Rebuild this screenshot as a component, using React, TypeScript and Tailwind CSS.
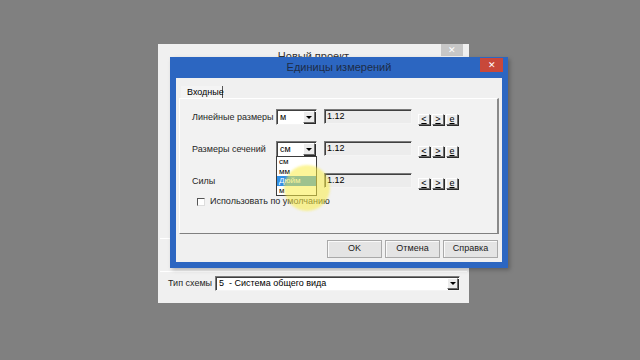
import React from 'react';

const sunken = 'border border-t-[#7a7a7a] border-l-[#7a7a7a] border-b-[#f4f4f4] border-r-[#f4f4f4] shadow-[inset_1px_1px_0_#404040]';
const raised = 'border border-t-[#ffffff] border-l-[#ffffff] border-b-[#6b6b6b] border-r-[#6b6b6b] shadow-[1px_1px_0_#2a2a2a] bg-[#ececec]';

function Combo({ value }: { value: string }) {
  return (
    <div className={`w-[41px] h-[16px] bg-white flex items-center ${sunken}`}>
      <span className="flex-1 pl-[3px] text-[9px] leading-none text-black">{value}</span>
      <div className={`w-[12px] h-[12px] mr-[1px] flex items-center justify-center ${raised}`}>
        <span className="w-0 h-0 border-l-[3px] border-r-[3px] border-t-[3px] border-l-transparent border-r-transparent border-t-black" />
      </div>
    </div>
  );
}

function NavButtons() {
  return (
    <div className="flex gap-[2px] mt-[5px] ml-[6px]">
      {['<', '>', 'e'].map((t) => (
        <div
          key={t}
          className={`w-[12px] h-[11px] flex items-center justify-center text-[9px] leading-none text-black ${raised}`}
        >
          <span className="underline decoration-[0.5px] underline-offset-1">{t}</span>
        </div>
      ))}
    </div>
  );
}

function Row({ label, unit, children }: { label: string; unit: string; children?: React.ReactNode }) {
  return (
    <div className="relative flex items-start h-[16px]">
      <span className="w-[84px] mt-[3px] text-[9px] leading-[10px] text-[#262626] whitespace-nowrap">{label}</span>
      <div className="relative">
        <Combo value={unit} />
        {children}
      </div>
      <div className={`ml-[7px] w-[88px] h-[15px] bg-[#ececec] text-[9px] leading-none pl-[2px] pt-[2px] text-black ${sunken}`}>
        1.12
      </div>
      <NavButtons />
    </div>
  );
}

function DropList() {
  const items = ['см', 'мм', 'Дюйм', 'м'];
  return (
    <div className="absolute left-0 top-[15px] w-[41px] bg-white border border-[#3c3c3c] flex flex-col z-10">
      {items.map((it) => (
        <div
          key={it}
          className={`h-[9.5px] pl-[2px] text-[8px] leading-[9.5px] ${
            it === 'Дюйм' ? 'bg-[#2f8fe6] text-white' : 'text-black'
          }`}
        >
          {it}
        </div>
      ))}
    </div>
  );
}

function DlgButton({ label }: { label: string }) {
  return (
    <div className="w-[55px] h-[18px] bg-[#e4e4e4] border border-[#a9a9a9] shadow-[inset_1px_1px_0_#fafafa] flex items-center justify-center text-[9px] text-[#1a1a1a]">
      {label}
    </div>
  );
}

export default function App() {
  return (
    <div className="relative w-[640px] h-[360px] bg-[#808080] overflow-hidden font-['Liberation_Sans',Arial,sans-serif]">
      {/* Back window: Новый проект */}
      <div className="absolute left-[158px] top-[44px] w-[311px] h-[259px] bg-[#f0f0f0] flex flex-col">
        <div className="relative h-[16px] flex items-center justify-center">
          <span className="text-[11px] text-[#333] mt-[8px]">Новый проект</span>
          <div className="absolute right-[6px] top-0 w-[22px] h-[12px] bg-[#c7c7c7] flex items-center justify-center text-white text-[9px] leading-none">
            ✕
          </div>
        </div>
        <div className="flex-1" />
        <div className="mx-[2px] h-px bg-[#a0a0a0] border-b border-white mb-[32px]" />
        <div className="mx-[2px] h-px bg-[#a0a0a0] border-b border-white" />
        <div className="flex items-center h-[15px] mt-[4px] mb-[12px] pl-[10px] pr-[9px]">
          <span className="w-[47px] text-[9px] text-[#262626] whitespace-nowrap">Тип схемы</span>
          <div className={`flex-1 h-[15px] bg-white flex items-center ${sunken}`}>
            <span className="flex-1 pl-[3px] text-[9px] leading-none text-black">5&nbsp; - Система общего вида</span>
            <div className={`w-[11px] h-[11px] mr-[1px] flex items-center justify-center ${raised}`}>
              <span className="w-0 h-0 border-l-[3px] border-r-[3px] border-t-[3px] border-l-transparent border-r-transparent border-t-black" />
            </div>
          </div>
        </div>
      </div>

      {/* Front dialog: Единицы измерений */}
      <div className="absolute left-[170px] top-[57px] w-[338px] h-[211px] bg-[#2c66c1] px-[6px] pb-[6px] flex flex-col shadow-[2px_2px_4px_rgba(0,0,0,0.25)]">
        <div className="relative h-[21px] flex items-center justify-center">
          <span className="text-[11px] text-[#1d2c47]">Единицы измерений</span>
          <div className="absolute right-[-1px] top-[1px] w-[23px] h-[14px] bg-[#c8483a] flex items-center justify-center text-white text-[9px] leading-none">
            ✕
          </div>
        </div>
        <div className="flex-1 bg-[#f0f0f0] flex flex-col px-[3px] pt-[8px]">
          {/* tab header */}
          <div className="flex h-[12px] pl-[2px]">
            <div className="w-[42px] h-[12px] border-r border-r-[#555] flex items-center pl-[6px] text-[9px] leading-none text-black bg-[#f4f4f4]">
              Входные
            </div>
          </div>
          {/* tab panel */}
          <div className="h-[136px] border-t border-t-white border-l border-l-white border-r-2 border-r-[#8a8a8a] border-b border-b-[#808080] bg-[#f2f2f2] flex flex-col gap-[16px] pt-[10px] pl-[12px]">
            <Row label="Линейные размеры" unit="м" />
            <Row label="Размеры сечений" unit="см">
              <DropList />
            </Row>
            <Row label="Силы" unit="" />
            <div className="flex items-center -mt-[8px] pl-[5px]">
              <div className="w-[8px] h-[8px] bg-white border border-t-[#555] border-l-[#555] border-b-[#ddd] border-r-[#ddd]" />
              <span className="ml-[5px] text-[9px] leading-none text-[#262626]">Использовать по умолчанию</span>
            </div>
          </div>
          {/* buttons */}
          <div className="flex justify-end gap-[3px] mt-[6px] pr-[1px]">
            <DlgButton label="OK" />
            <DlgButton label="Отмена" />
            <DlgButton label="Справка" />
          </div>
        </div>
      </div>

      {/* cursor highlight */}
      <div className="absolute left-[284px] top-[165px] w-[46px] h-[46px] rounded-full bg-[rgba(250,236,70,0.55)] blur-[1px] z-20 pointer-events-none" />
    </div>
  );
}
